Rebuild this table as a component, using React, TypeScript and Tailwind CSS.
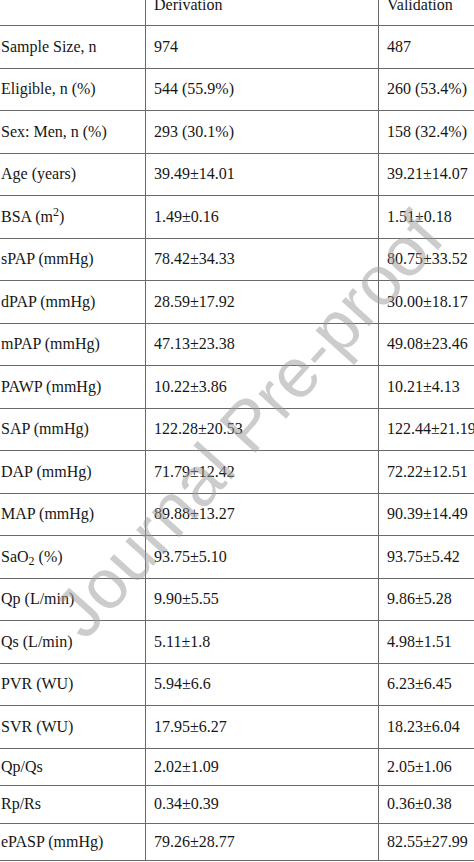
import React from 'react'

interface Row {
  label: React.ReactNode
  derivation: string
  validation: string
  short?: boolean
}

const rows: Row[] = [
  { label: 'Sample Size, n', derivation: '974', validation: '487' },
  { label: 'Eligible, n (%)', derivation: '544 (55.9%)', validation: '260 (53.4%)' },
  { label: 'Sex: Men, n (%)', derivation: '293 (30.1%)', validation: '158 (32.4%)' },
  { label: 'Age (years)', derivation: '39.49±14.01', validation: '39.21±14.07' },
  {
    label: (
      <>
        BSA (m<sup>2</sup>)
      </>
    ),
    derivation: '1.49±0.16',
    validation: '1.51±0.18',
  },
  { label: 'sPAP (mmHg)', derivation: '78.42±34.33', validation: '80.75±33.52' },
  { label: 'dPAP (mmHg)', derivation: '28.59±17.92', validation: '30.00±18.17' },
  { label: 'mPAP (mmHg)', derivation: '47.13±23.38', validation: '49.08±23.46' },
  { label: 'PAWP (mmHg)', derivation: '10.22±3.86', validation: '10.21±4.13' },
  { label: 'SAP (mmHg)', derivation: '122.28±20.53', validation: '122.44±21.19' },
  { label: 'DAP (mmHg)', derivation: '71.79±12.42', validation: '72.22±12.51' },
  { label: 'MAP (mmHg)', derivation: '89.88±13.27', validation: '90.39±14.49' },
  {
    label: (
      <>
        SaO<sub>2</sub> (%)
      </>
    ),
    derivation: '93.75±5.10',
    validation: '93.75±5.42',
  },
  { label: 'Qp (L/min)', derivation: '9.90±5.55', validation: '9.86±5.28' },
  { label: 'Qs (L/min)', derivation: '5.11±1.8', validation: '4.98±1.51' },
  { label: 'PVR (WU)', derivation: '5.94±6.6', validation: '6.23±6.45' },
  { label: 'SVR (WU)', derivation: '17.95±6.27', validation: '18.23±6.04' },
  { label: 'Qp/Qs', derivation: '2.02±1.09', validation: '2.05±1.06', short: true },
  { label: 'Rp/Rs', derivation: '0.34±0.39', validation: '0.36±0.38', short: true },
  { label: 'ePASP (mmHg)', derivation: '79.26±28.77', validation: '82.55±27.99', short: true },
]

const cell = 'border-[1.5px] border-[#6a6a6a] px-2 whitespace-nowrap text-left font-normal'

export default function App() {
  return (
    <div className="relative w-[474px] h-[862px] overflow-hidden bg-white text-[#161616] font-[Liberation_Serif,Times_New_Roman,serif] text-[16px] leading-tight">
      <table className="-mt-[17px] -ml-[8px] border-collapse table-fixed w-[610px]">
        <colgroup>
          <col className="w-[153px]" />
          <col className="w-[233px]" />
          <col className="w-[224px]" />
        </colgroup>
        <thead>
          <tr className="h-[42px]">
            <th className={cell}></th>
            <th className={cell}>Derivation</th>
            <th className={cell}>Validation</th>
          </tr>
        </thead>
        <tbody>
          {rows.map((row, i) => (
            <tr key={i} className={row.short ? 'h-[37.5px]' : 'h-[42.5px]'}>
              <td className={cell}>{row.label}</td>
              <td className={cell}>{row.derivation}</td>
              <td className={cell}>{row.validation}</td>
            </tr>
          ))}
        </tbody>
      </table>

      {/* watermark */}
      <div className="pointer-events-none absolute left-[248px] top-[425px] -translate-x-1/2 -translate-y-1/2 -rotate-[48deg] whitespace-nowrap font-[Liberation_Sans,Arial,sans-serif] text-[70px] leading-none text-[#9a9a9a]/50">
        Journal Pre-proof
      </div>
    </div>
  )
}
